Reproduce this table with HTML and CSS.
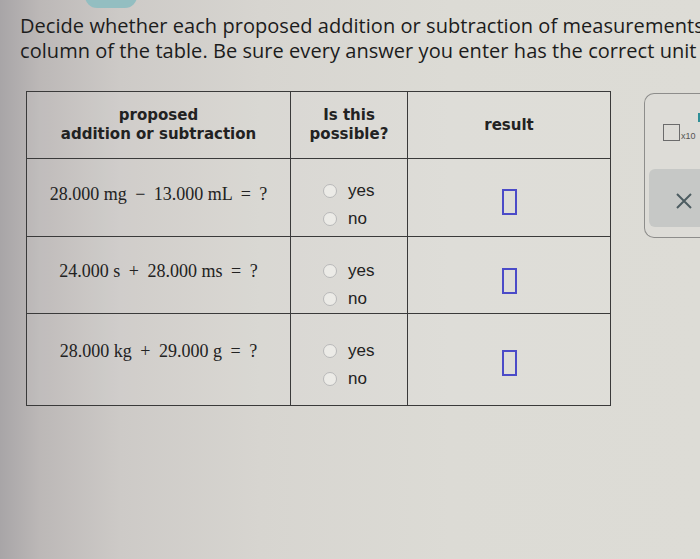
FILE: index.html
```html
<!DOCTYPE html>
<html>
<head>
<meta charset="utf-8">
<link rel="stylesheet" href="styles.css">
</head>
<body>
<div class="tab-blob"></div>
<div class="page">
  <div class="prompt">
    <p>Decide whether each proposed addition or subtraction of measurements is possible. If it is, enter the result in the last</p>
    <p>column of the table. Be sure every answer you enter has the correct unit symbol.</p>
  </div>
  <div class="work">
    <table class="grid">
      <colgroup><col class="c1"><col class="c2"><col class="c3"></colgroup>
      <thead>
        <tr class="rh">
          <th>proposed<br>addition or subtraction</th>
          <th>Is this<br>possible?</th>
          <th>result</th>
        </tr>
      </thead>
      <tbody>
        <tr class="r1">
          <td class="eq">28.000 mg <span class="op">&minus;</span> 13.000 mL <span class="op">=</span> ?</td>
          <td class="choice">
            <label class="radio"><span class="dot"></span>yes</label>
            <label class="radio"><span class="dot"></span>no</label>
          </td>
          <td class="res"><span class="box"></span></td>
        </tr>
        <tr class="r2">
          <td class="eq">24.000 s <span class="op">+</span> 28.000 ms <span class="op">=</span> ?</td>
          <td class="choice">
            <label class="radio"><span class="dot"></span>yes</label>
            <label class="radio"><span class="dot"></span>no</label>
          </td>
          <td class="res"><span class="box"></span></td>
        </tr>
        <tr class="r3">
          <td class="eq">28.000 kg <span class="op">+</span> 29.000 g <span class="op">=</span> ?</td>
          <td class="choice">
            <label class="radio"><span class="dot"></span>yes</label>
            <label class="radio"><span class="dot"></span>no</label>
          </td>
          <td class="res"><span class="box"></span></td>
        </tr>
      </tbody>
    </table>
    <div class="tools">
      <div class="tool-row">
        <span class="sq"></span><span class="x10">x10</span><span class="teal-mark"></span>
      </div>
      <div class="clear-btn">
        <svg width="18" height="18" viewBox="0 0 18 18"><path d="M2 2 L16 16 M16 2 L2 16" stroke="#4d5d61" stroke-width="2" fill="none"/></svg>
      </div>
    </div>
  </div>
</div>
</body>
</html>
```
FILE: styles.css
```css
html, body {
  margin: 0;
  padding: 0;
}
body {
  width: 700px;
  height: 559px;
  overflow: hidden;
  position: relative;
  background: linear-gradient(to right, #a8a5a7 0px, #bcb8b7 40px, #cdcac7 120px, #d7d5d0 260px, #dcdbd5 450px, #dddcd6 700px);
  font-family: "Open Sans", "Liberation Sans", sans-serif;
  color: #1e1e1e;
}
.tab-blob {
  position: absolute;
  left: 85px;
  top: -6px;
  width: 52px;
  height: 14px;
  border-radius: 0 0 12px 12px;
  background: #93bec1;
}
.page {
  padding: 13px 0 0 20px;
}
.prompt {
  width: 680px;
  overflow: hidden;
}
.prompt p {
  margin: 0;
  white-space: nowrap;
  font-size: 20px;
  line-height: 25px;
  letter-spacing: 0.05px;
  color: #1c1c1c;
}
.work {
  display: flex;
  align-items: flex-start;
  margin-top: 28px;
  margin-left: 6px;
}
.grid {
  border-collapse: collapse;
  background: rgba(255, 255, 255, 0.07);
  flex: none;
}
.c1 { width: 264px; }
.c2 { width: 117px; }
.c3 { width: 203px; }
.grid th, .grid td {
  border: 1.5px solid #3a3a3a;
  padding: 0;
}
.rh { height: 67px; }
.r1 { height: 78px; }
.r2 { height: 75px; }
.r3 { height: 92px; }
.grid th {
  font-family: "DejaVu Sans", Verdana, sans-serif;
  font-weight: bold;
  font-size: 15px;
  line-height: 19px;
  color: #222;
  text-align: center;
  vertical-align: middle;
}
.grid td {
  vertical-align: top;
}
.grid td.eq {
  font-family: "Liberation Serif", "Times New Roman", serif;
  font-size: 18px;
  line-height: 20px;
  color: #222;
  text-align: center;
  padding-top: 25px;
}
.r2 td.eq { padding-top: 24px; }
.r3 td.eq { padding-top: 27px; }
.op {
  margin: 0 4px;
}
.grid td.choice {
  padding: 18px 0 0 32px;
}
.r2 td.choice { padding-top: 20px; }
.r3 td.choice { padding-top: 23px; }
.radio {
  display: flex;
  align-items: center;
  gap: 11px;
  height: 28px;
  font-family: "Liberation Sans", Arial, sans-serif;
  font-size: 17px;
  color: #222;
}
.dot {
  width: 14px;
  height: 14px;
  border-radius: 50%;
  border: 1.5px solid #b9b9b9;
  background: #ecebe7;
  box-sizing: border-box;
}
.grid td.res {
  text-align: center;
  padding-top: 30px;
}
.r2 td.res { padding-top: 31px; }
.r3 td.res { padding-top: 36px; }
.box {
  display: inline-block;
  vertical-align: top;
  width: 15px;
  height: 26px;
  border: 2px solid #4b4bc8;
  box-sizing: border-box;
}
.tools {
  flex: none;
  margin-left: 33px;
  margin-top: 2px;
  width: 80px;
  height: 145px;
  border: 1.5px solid #8d8d8b;
  border-right: none;
  border-radius: 10px 0 0 10px;
  background: #dddcd7;
  box-sizing: border-box;
  padding: 29px 0 0 18px;
  display: flex;
  flex-direction: column;
}
.tool-row {
  display: flex;
  align-items: flex-end;
  height: 18px;
  position: relative;
}
.sq {
  width: 17px;
  height: 17px;
  border: 1.5px solid #6b6b6b;
  box-sizing: border-box;
}
.x10 {
  font-family: "Liberation Sans", Arial, sans-serif;
  font-size: 9px;
  line-height: 9px;
  color: #555;
  margin-left: 1px;
}
.teal-mark {
  position: absolute;
  left: 35px;
  top: -10px;
  width: 3px;
  height: 9px;
  background: #2e8f97;
}
.clear-btn {
  margin: 28px 0 0 -14px;
  height: 58px;
  width: 70px;
  border-radius: 6px 0 0 6px;
  background: #c6c8c6;
  display: flex;
  align-items: center;
  padding: 6px 0 0 26px;
  box-sizing: border-box;
}
```
